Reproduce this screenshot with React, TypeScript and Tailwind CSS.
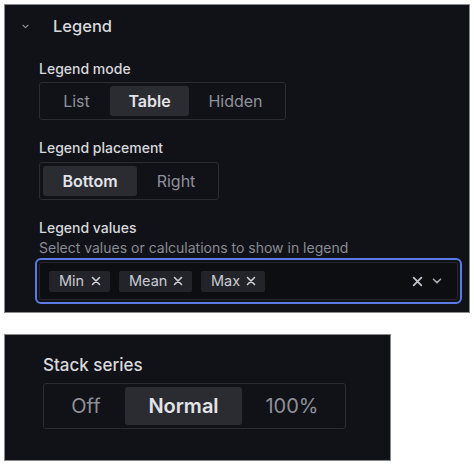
import type { ReactNode } from 'react';

const font = { fontFamily: 'Inter, "Noto Sans", sans-serif' };

function Chevron({ className = '' }: { className?: string }) {
  return (
    <svg viewBox="0 0 10 6" className={className} fill="none" stroke="currentColor" strokeWidth="1.6" strokeLinecap="round" strokeLinejoin="round">
      <path d="M1.5 1.2 5 4.6 8.5 1.2" />
    </svg>
  );
}

function Cross({ className = '' }: { className?: string }) {
  return (
    <svg viewBox="0 0 10 10" className={className} fill="none" stroke="currentColor" strokeWidth="1.6" strokeLinecap="round">
      <path d="M1.5 1.5 8.5 8.5M8.5 1.5 1.5 8.5" />
    </svg>
  );
}

type Opt = { label: string; w: string; active?: boolean };

function RadioGroup({ options, size = 'sm' }: { options: Opt[]; size?: 'sm' | 'lg' }) {
  const lg = size === 'lg';
  return (
    <div className={`flex w-fit rounded-[3px] border border-[#2b2d33] bg-[#111217] p-[3px] ${lg ? 'h-[46px]' : 'h-[38px]'}`}>
      {options.map((o) => (
        <div
          key={o.label}
          className={`flex items-center justify-center rounded-[3px] ${o.w} ${
            o.active ? 'bg-[#2b2c32] text-[#e3e4e8] font-semibold' : 'text-[#8f909a]'
          } ${lg ? 'text-[20px]' : 'text-[16px]'}`}
        >
          {o.label}
        </div>
      ))}
    </div>
  );
}

function Label({ children, className = '' }: { children: ReactNode; className?: string }) {
  return <div className={`font-medium text-[#d8d9de] leading-none ${className}`}>{children}</div>;
}

function Chip({ label, w }: { label: string; w: string }) {
  return (
    <div className={`flex h-[21px] items-center justify-between rounded-[2px] bg-[#22242a] pl-[10px] pr-[9px] text-[14.5px] text-[#c9cad1] ${w}`}>
      <span>{label}</span>
      <Cross className="h-[10px] w-[10px] text-[#d0d1d6]" />
    </div>
  );
}

export default function App() {
  return (
    <div className="min-h-screen bg-white pl-[4px] pt-[4px]" style={font}>
      <section className="h-[309px] w-[466px] border border-[#8a8a8a] bg-[#111217]">
        <div className="flex h-[42px] items-center pl-[17px]">
          <Chevron className="h-[5px] w-[7px] text-[#8f909a]" />
          <span className="ml-[24px] text-[16.5px] font-medium text-[#d8d9de]">Legend</span>
        </div>

        <div className="pl-[34px]">
          <Label className="mt-[15px] text-[14px]">Legend mode</Label>
          <div className="mt-[6px]">
            <RadioGroup
              options={[
                { label: 'List', w: 'w-[67px]' },
                { label: 'Table', w: 'w-[79px]', active: true },
                { label: 'Hidden', w: 'w-[93px]' },
              ]}
            />
          </div>

          <Label className="mt-[21px] text-[14px]">Legend placement</Label>
          <div className="mt-[7px]">
            <RadioGroup
              options={[
                { label: 'Bottom', w: 'w-[94px]', active: true },
                { label: 'Right', w: 'w-[78px]' },
              ]}
            />
          </div>

          <Label className="mt-[21px] text-[14px]">Legend values</Label>
          <div className="mt-[6px] text-[14px] leading-none text-[#8a8b95]">Select values or calculations to show in legend</div>
        </div>

        <div className="ml-[30px] mt-[3px] h-[46px] w-[427px] rounded-[6px] border-2 border-[#5a7be6] p-[2px]">
          <div className="flex h-full items-center rounded-[3px] border border-[#25272d] bg-[#0d0e12] pl-[9px] pr-[15px]">
            <div className="flex gap-[9px]">
              <Chip label="Min" w="w-[61px]" />
              <Chip label="Mean" w="w-[73px]" />
              <Chip label="Max" w="w-[64px]" />
            </div>
            <div className="ml-auto flex items-center gap-[9px]">
              <Cross className="h-[11px] w-[11px] text-[#c4c5cc]" />
              <Chevron className="h-[6px] w-[10px] text-[#a9aab2]" />
            </div>
          </div>
        </div>
      </section>

      <section className="mt-[21px] h-[127px] w-[387px] border border-[#8a8a8a] bg-[#111217] pl-[38px]">
        <Label className="mt-[22px] text-[17px]">Stack series</Label>
        <div className="mt-[9px]">
          <RadioGroup
            size="lg"
            options={[
              { label: 'Off', w: 'w-[78px]' },
              { label: 'Normal', w: 'w-[117px]', active: true },
              { label: '100%', w: 'w-[100px]' },
            ]}
          />
        </div>
      </section>
    </div>
  );
}
